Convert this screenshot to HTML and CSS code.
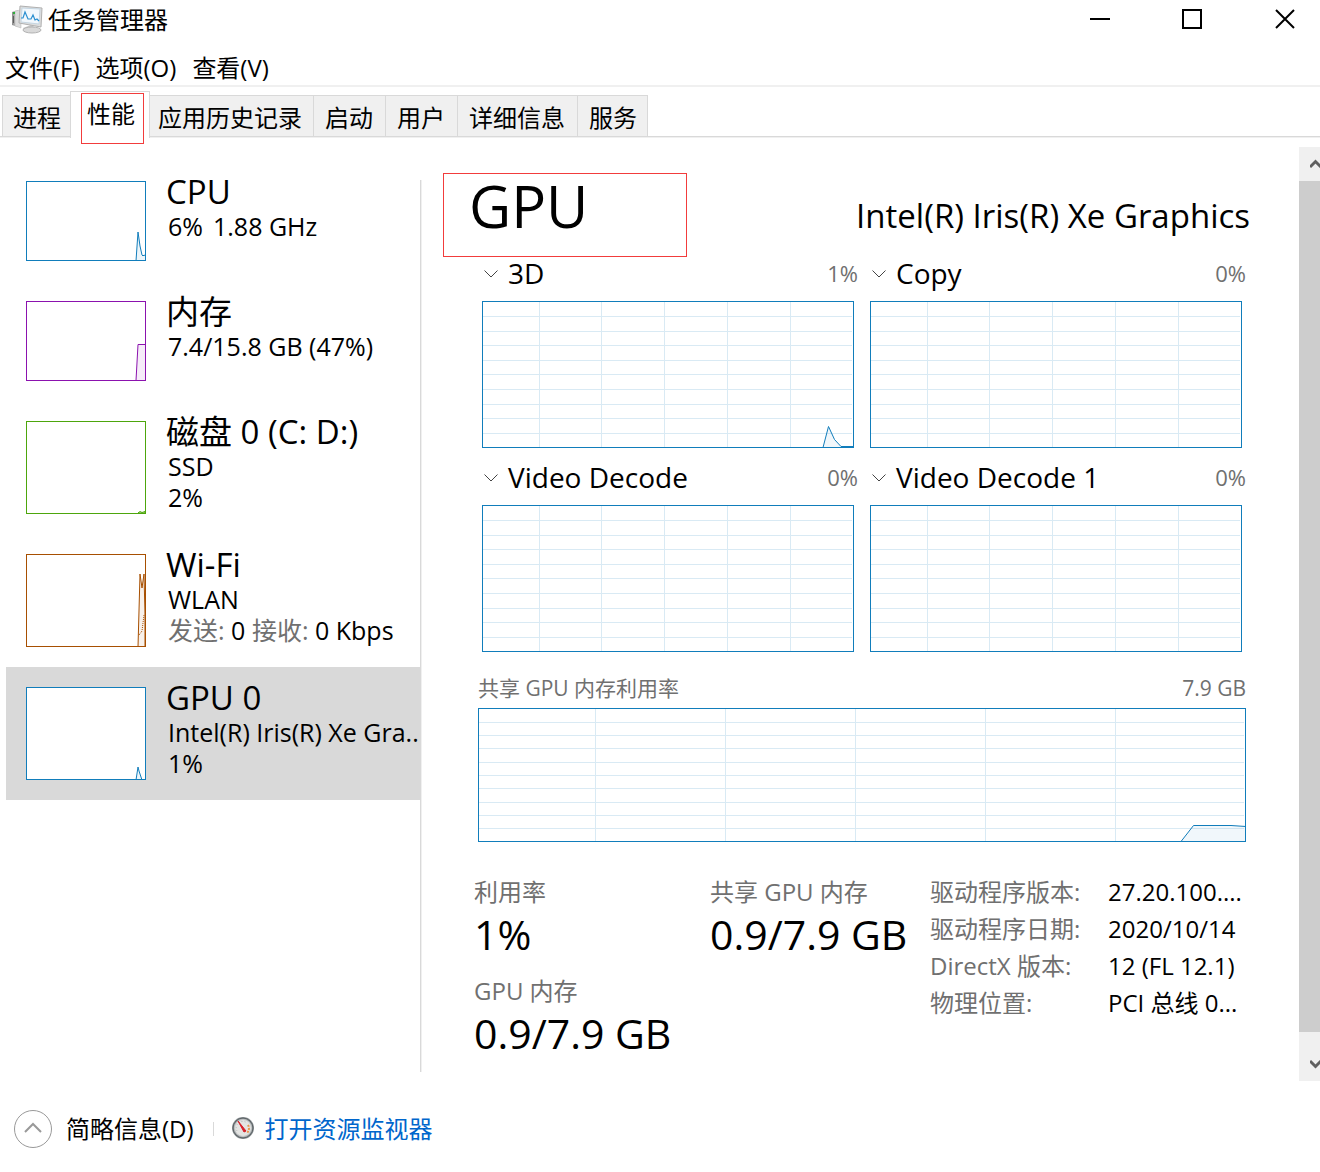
FILE: index.html
```
<!DOCTYPE html>
<html lang="zh-CN">
<head>
    <meta charset="UTF-8">
    <meta name="viewport" content="width=device-width, initial-scale=1.0">
    <title>任务管理器</title>
    <link rel="stylesheet" href="styles.css">
</head>
<body>
    <header class="title-bar">
        <svg class="app-icon" width="32" height="30" viewBox="0 0 32 30" aria-hidden="true">
            <defs>
                <linearGradient id="case" x1="0" y1="0" x2="1" y2="0">
                    <stop offset="0" stop-color="#8b8b8b"/>
                    <stop offset="1" stop-color="#d8d8d8"/>
                </linearGradient>
            </defs>
            <path d="M0 7l6-2v17l-6-2z" fill="url(#case)"/>
            <path d="M3 6l6-1v18l-6-2z" fill="#dcdcdc" stroke="#b5b5b5" stroke-width="0.500"/>
            <path d="M1 8h2" stroke="#2fae3b" stroke-width="2"/>
            <path d="M1.500 11v7" stroke="#5e5e5e"/>
            <path d="M11 23l8-3 5 3-2 5-9-1z" fill="#c9c9c9"/>
            <ellipse cx="20" cy="25" rx="9" ry="3" fill="#d9d9d9" stroke="#b3b3b3"/>
            <path d="M8 1l22 2-1 19-22-4z" fill="#dedede" stroke="#b0b0b0"/>
            <path d="M10 3l18 1-1 15-18-2z" fill="#f2f8fd" stroke="#c5d6e2"/>
            <path d="M9 13l2 0 2-6 3 7 3 0 2-4 2 5 2-1 2 2" fill="none" stroke="#2b8fd0" stroke-width="1.200"/>
        </svg>
        <h1>任务管理器</h1>
        <div class="window-buttons">
            <button aria-label="最小化"><svg width="20" height="20"><path d="M0 10h20"/></svg></button>
            <button aria-label="最大化"><svg width="20" height="20"><path d="M1 1h18v18H1z"/></svg></button>
            <button aria-label="关闭"><svg width="20" height="20"><path d="M1 1l18 18M19 1L1 19"/></svg></button>
        </div>
    </header>

    <nav class="menu">
        <button>文件(F)</button>
        <button>选项(O)</button>
        <button>查看(V)</button>
    </nav>

    <div class="tabs" role="tablist">
        <button role="tab">进程</button>
        <button role="tab" class="selected" aria-selected="true"><span class="mark">性能</span></button>
        <button role="tab" class="history">应用历史记录</button>
        <button role="tab">启动</button>
        <button role="tab">用户</button>
        <button role="tab">详细信息</button>
        <button role="tab">服务</button>
    </div>

    <main>
        <aside class="sidebar">
            <button class="item cpu">
                <svg class="thumb" viewBox="0 0 118 78" preserveAspectRatio="none">
                    <path d="M109 79L111 50L113 64L115 73L116 74L117 73L119 74V79z"/>
                </svg>
                <span class="info">
                    <span class="name">CPU</span>
                    <span class="value spaced"><span>6%</span><span>1.88 GHz</span></span>
                </span>
            </button>
            <button class="item memory">
                <svg class="thumb" viewBox="0 0 118 78" preserveAspectRatio="none">
                    <path d="M109 78.500L111 42.500H119V78.500z"/>
                </svg>
                <span class="info">
                    <span class="name">内存</span>
                    <span class="value">7.4/15.8 GB (47%)</span>
                </span>
            </button>
            <button class="item disk">
                <svg class="thumb tall" viewBox="0 0 118 91" preserveAspectRatio="none">
                    <path d="M111 91L113 89.500L115 90.500L118 89.500V91z"/>
                </svg>
                <span class="info">
                    <span class="name">磁盘 0 (C: D:)</span>
                    <span class="value">SSD</span>
                    <span class="value">2%</span>
                </span>
            </button>
            <button class="item wifi">
                <svg class="thumb tall" viewBox="0 0 118 91" preserveAspectRatio="none">
                    <path d="M111 92L113 19L115 33L117 19L118 60V92z"/>
                    <path class="send" d="M112 80L115 76L117 60L118 60"/>
                </svg>
                <span class="info">
                    <span class="name">Wi-Fi</span>
                    <span class="value"><span>WLAN</span></span>
                    <span class="value"><span class="label">发送:</span> 0 <span class="label">接收:</span> 0 Kbps</span>
                </span>
            </button>
            <button class="item gpu selected">
                <svg class="thumb tall" viewBox="0 0 118 91" preserveAspectRatio="none">
                    <path d="M109 92L111 79L112 83L115 92z"/>
                </svg>
                <span class="info">
                    <span class="name">GPU 0</span>
                    <span class="value">Intel(R) Iris(R) Xe Gra...</span>
                    <span class="value">1%</span>
                </span>
            </button>
        </aside>

        <div class="divider"></div>

        <section class="detail">
            <div class="detail-header">
                <h2>GPU</h2>
                <p>Intel(R) Iris(R) Xe Graphics</p>
            </div>

            <!-- Grid lines shared by the four engine charts -->
            <svg class="defs" width="0" height="0">
                <defs>
                    <path id="grid" class="grid" d="M56.500 0V145M118.500 0V145M181.500 0V145M244.500 0V145M307.500 0V145M0 14.500H369M0 29.500H369M0 43.500H369M0 58.500H369M0 72.500H369M0 87.500H369M0 102.500H369M0 116.500H369M0 131.500H369"/>
                </defs>
            </svg>

            <div class="engines">
                <div class="engine">
                    <div class="engine-title">
                        <button><svg class="chevron" width="14" height="8"><path d="M0.500 0.500L7 7L13.500 0.500"/></svg>3D</button>
                        <span>1%</span>
                    </div>
                    <svg class="chart" viewBox="0 0 370 145" preserveAspectRatio="none">
                        <use href="#grid"/>
                        <path class="usage" d="M340 145.500L345.500 124.500L351.500 137.500L358 144.500H371"/>
                    </svg>
                </div>
                <div class="engine">
                    <div class="engine-title">
                        <button><svg class="chevron" width="14" height="8"><path d="M0.500 0.500L7 7L13.500 0.500"/></svg>Copy</button>
                        <span>0%</span>
                    </div>
                    <svg class="chart" viewBox="0 0 370 145" preserveAspectRatio="none"><use href="#grid"/></svg>
                </div>
                <div class="engine">
                    <div class="engine-title">
                        <button><svg class="chevron" width="14" height="8"><path d="M0.500 0.500L7 7L13.500 0.500"/></svg>Video Decode</button>
                        <span>0%</span>
                    </div>
                    <svg class="chart" viewBox="0 0 370 145" preserveAspectRatio="none"><use href="#grid"/></svg>
                </div>
                <div class="engine">
                    <div class="engine-title">
                        <button><svg class="chevron" width="14" height="8"><path d="M0.500 0.500L7 7L13.500 0.500"/></svg>Video Decode 1</button>
                        <span>0%</span>
                    </div>
                    <svg class="chart" viewBox="0 0 370 145" preserveAspectRatio="none"><use href="#grid"/></svg>
                </div>
            </div>

            <div class="shared">
                <div class="shared-title">
                    <span>共享 GPU 内存利用率</span>
                    <span>7.9 GB</span>
                </div>
                <svg class="chart" viewBox="0 0 766 132" preserveAspectRatio="none">
                    <path class="grid" d="M116.500 0V132M246.500 0V132M376.500 0V132M506.500 0V132M636.500 0V132M0 13.500H765M0 26.500H765M0 39.500H765M0 53.500H765M0 66.500H765M0 79.500H765M0 93.500H765M0 106.500H765M0 119.500H765"/>
                    <path class="usage" d="M702 132.500L714.500 116.500H752L767 117.500V133"/>
                </svg>
            </div>

            <div class="stats">
                <div class="stat">
                    <h3>利用率</h3>
                    <p>1%</p>
                    <h3>GPU 内存</h3>
                    <p>0.9/7.9 GB</p>
                </div>
                <div class="stat">
                    <h3>共享 GPU 内存</h3>
                    <p>0.9/7.9 GB</p>
                </div>
                <table>
                    <tr><th scope="row">驱动程序版本:</th><td>27.20.100....</td></tr>
                    <tr><th scope="row">驱动程序日期:</th><td>2020/10/14</td></tr>
                    <tr><th scope="row">DirectX 版本:</th><td>12 (FL 12.1)</td></tr>
                    <tr><th scope="row">物理位置:</th><td>PCI 总线 0...</td></tr>
                </table>
            </div>
        </section>

        <div class="scrollbar">
            <button aria-label="向上滚动"><svg width="10" height="10"><path d="M0 8L5.500 2.500L11 8"/></svg></button>
            <div class="scroll-thumb"></div>
            <button class="down" aria-label="向下滚动"><svg width="10" height="10"><path d="M0 2L5.500 7.500L11 2"/></svg></button>
        </div>
    </main>

    <footer>
        <button class="fewer">
            <svg width="38" height="38" viewBox="0 0 38 38">
                <circle cx="19" cy="19" r="18.500"/>
                <path d="M11 22L19 14L27 22"/>
            </svg>
            简略信息(D)
        </button>
        <span class="separator"></span>
        <a href="#">
            <svg width="24" height="24" viewBox="0 0 24 24" aria-hidden="true">
                <circle cx="12" cy="11" r="11" fill="#8d9396"/>
                <circle cx="12" cy="11" r="10" fill="none" stroke="#5d6366"/>
                <circle cx="12" cy="11" r="8.500" fill="#e4e4e2" stroke="#c3c6c7"/>
                <path d="M17 8A6.500 6.500 0 0 1 16 16" fill="none" stroke="#e8954a" stroke-width="2" stroke-dasharray="2 1"/>
                <path d="M6 14A6.500 6.500 0 0 1 16 6" fill="none" stroke="#b4b9bb" stroke-dasharray="1 2"/>
                <path d="M7 4L15 14L13 15z" fill="#d8202a" stroke="#d8202a"/>
            </svg>
            打开资源监视器
        </a>
    </footer>
</body>
</html>
```
FILE: styles.css
```
*, *::after {
    box-sizing: border-box;
}

body {
    margin: 0;
    min-height: 100vh;
    display: flex;
    flex-direction: column;
    background: #fff;
    color: #000;
    font-family: "Open Sans", "Noto Sans CJK SC", sans-serif;
    font-size: 24px;
    line-height: 32px;
}

h1, h2, h3, p {
    margin: 0;
    font-weight: normal;
}

button {
    padding: 0;
    border: none;
    background: none;
    color: inherit;
    font: inherit;
    text-align: left;
}

svg {
    display: block;
    flex: none;
}

/* Title bar and menu */
.title-bar {
    display: flex;
    align-items: center;
    height: 40px;
    padding-left: 12px;
}

.title-bar h1 {
    margin-left: 4px;
    font-size: 24px;
}

.window-buttons {
    display: flex;
    align-self: flex-start;
    margin-left: auto;
}

.window-buttons button {
    width: 92px;
    height: 38px;
    display: flex;
    align-items: center;
    justify-content: center;
}

.window-buttons button:last-child {
    width: 82px;
    padding-left: 12px;
}

.window-buttons path {
    fill: none;
    stroke: #000;
    stroke-width: 2;
}

.menu {
    display: flex;
    gap: 16px;
    height: 47px;
    padding: 10px 5px 0;
    border-bottom: 2px solid #f0f0f0;
}

/* Tabs */
.tabs {
    display: flex;
    align-items: flex-end;
    height: 51px;
    padding-left: 2px;
    box-shadow: inset 0 -1px #f0f0f0, inset 0 -2px #d9d9d9;
}

.tabs button {
    height: 42px;
    margin-bottom: 1px;
    padding: 3px 12px 0 11px;
    border: 1px solid #d9d9d9;
    border-left: none;
    background: #f0f0f0;
}

.tabs button:first-child {
    border-left: 1px solid #d9d9d9;
    border-right: none;
    padding: 3px 9px 0 10px;
}

.tabs button:last-child {
    padding-right: 10px;
}

.tabs .history {
    padding: 3px 11px 0 8px;
}

.tabs .selected {
    position: relative;
    width: 80px;
    height: 47px;
    margin-bottom: 0;
    padding: 0 0 3px 16px;
    border-left: 1px solid #d9d9d9;
    border-bottom: none;
    background: #fff;
}

.mark::after {
    content: "";
    position: absolute;
    top: 1px;
    left: 10px;
    width: 63px;
    height: 51px;
    border: 1px solid #f23c3c;
}

/* Main area */
main {
    flex: 1;
    display: flex;
}

.sidebar {
    width: 414px;
    flex: none;
    margin: 23px 0 0 6px;
}

.divider {
    flex: none;
    width: 2px;
    margin: 42px 0 9px;
    border-left: 1px solid #d9d9d9;
    border-right: 1px solid #f0f0f0;
}

.item {
    display: flex;
    align-items: flex-start;
    gap: 20px;
    width: 100%;
    padding: 12px 0 20px 20px;
    overflow: hidden;
}

.item.selected {
    background: #d9d9d9;
}

.thumb {
    width: 120px;
    height: 80px;
    margin-top: 8px;
    border: 1px solid;
    background: #fff;
    overflow: hidden;
}

.thumb.tall {
    height: 93px;
}

.thumb path {
    stroke: currentColor;
    fill: currentColor;
    fill-opacity: 0.08;
}

.thumb .send {
    fill: none;
    stroke-dasharray: 1 1;
}

.cpu .thumb, .gpu .thumb {
    color: #117dbb;
}

.memory .thumb {
    color: #8b12ae;
}

.disk .thumb {
    color: #4da60c;
}

.wifi .thumb {
    color: #a74f01;
}

.info {
    display: block;
    white-space: nowrap;
}

.name {
    display: block;
    font-size: 33px;
    line-height: 38px;
}

.value {
    display: block;
    padding-left: 2px;
    font-size: 25px;
    line-height: 31px;
}

.spaced {
    display: flex;
    gap: 10px;
}

.label {
    color: #707070;
}

/* GPU details */
.detail {
    flex: 1;
    min-width: 0;
    padding: 35px 53px 0 21px;
}

.detail-header {
    display: flex;
    justify-content: space-between;
}

.detail-header h2 {
    width: 244px;
    height: 84px;
    padding-left: 25px;
    border: 1px solid #f23c3c;
    font-size: 58px;
    line-height: 64px;
}

.detail-header p {
    padding-top: 23px;
    margin-right: -4px;
    font-size: 33px;
    line-height: 40px;
}

.engines {
    display: grid;
    grid-template-columns: 1fr 1fr;
    column-gap: 8px;
    margin-left: 35px;
}

.engine-title {
    display: flex;
    justify-content: space-between;
    height: 44px;
    line-height: 32px;
}

.engine:nth-child(n+3) .engine-title {
    height: 57px;
    padding-top: 13px;
}

.engine-title button {
    display: flex;
    align-items: center;
    gap: 10px;
    height: 32px;
    padding-left: 6px;
    font-size: 28px;
}

.engine-title span {
    color: #707070;
    font-size: 22px;
}

.chevron {
    margin-top: 2px;
}

.chevron path {
    fill: none;
    stroke: #444;
}

.chart {
    width: 100%;
    border: 1px solid #117dbb;
    overflow: hidden;
}

.engine .chart {
    width: calc(100% - 8px);
    height: 147px;
    margin: 0 4px;
}

.grid {
    fill: none;
    stroke: #d9eaf4;
}

.usage {
    fill: #117dbb;
    fill-opacity: 0.06;
    stroke: #117dbb;
}

.shared {
    margin: 20px 0 0 35px;
}

.shared-title {
    display: flex;
    justify-content: space-between;
    height: 36px;
    color: #707070;
    font-size: 21px;
}

.shared .chart {
    height: 134px;
}

.stats {
    display: flex;
    padding: 31px 0 0 31px;
}

.stat {
    width: 236px;
    flex: none;
    white-space: nowrap;
}

.stat + .stat {
    width: 220px;
}

.stat h3 {
    height: 37px;
    line-height: 37px;
    color: #707070;
    font-size: 24px;
}

.stat p {
    height: 62px;
    font-size: 41px;
    line-height: 48px;
}

table {
    border-collapse: collapse;
    height: 148px;
    white-space: nowrap;
}

th, td {
    height: 37px;
    padding: 0;
    font-weight: normal;
    text-align: left;
    line-height: 37px;
}

th {
    width: 178px;
    color: #707070;
}

/* Scroll bar */
.scrollbar {
    flex: none;
    display: flex;
    flex-direction: column;
    width: 21px;
    margin-top: 9px;
    background: #f0f0f0;
}

.scrollbar button {
    height: 34px;
    padding: 0 0 0 11px;
}

.scrollbar .down {
    height: 49px;
    padding-top: 14px;
}

.scrollbar path {
    fill: none;
    stroke: #606060;
    stroke-width: 3;
}

.scroll-thumb {
    flex: 1;
    background: #cdcdcd;
}

/* Footer */
footer {
    display: flex;
    align-items: center;
    height: 91px;
    padding: 4px 14px 0;
}

.fewer, footer a {
    display: flex;
    align-items: center;
    gap: 14px;
}

.fewer circle, .fewer path {
    fill: none;
    stroke: #999;
}

.fewer path {
    stroke-width: 2;
}

.separator {
    width: 1px;
    height: 14px;
    margin: 0 17px 0 19px;
    background: #d9d9d9;
}

footer a {
    gap: 10px;
    color: #0066cc;
    text-decoration: none;
}
```
